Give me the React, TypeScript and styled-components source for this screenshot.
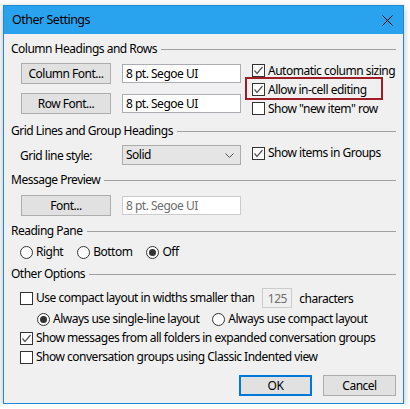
import React from "react";
import styled, { createGlobalStyle } from "styled-components";

const GlobalStyle = createGlobalStyle`
  html, body { margin: 0; padding: 0; background: #ffffff; }
  body {
    font-family: "Noto Sans", "Open Sans", "Liberation Sans", sans-serif;
    font-size: 12px;
    letter-spacing: -0.5px;
    color: #000;
  }
  * { box-sizing: border-box; }
`;

const Desktop = styled.div`
  padding: 5px 0 0 3px;
`;

const Window = styled.div`
  width: 401px;
  height: 399px;
  border: 1px solid #1c8ad9;
  box-shadow: 0 2px 7px rgba(0, 0, 0, 0.28);
  display: flex;
  flex-direction: column;
  background: #f0f0f0;
`;

const TitleBar = styled.div`
  height: 28px;
  background: #2aa3ef;
  display: flex;
  align-items: center;
  justify-content: space-between;
  padding: 0 10px 0 8px;
`;

const Title = styled.span`
  font-size: 12.5px;
  letter-spacing: -0.5px;
  line-height: 16px;
`;

const Body = styled.div`
  flex: 1;
  display: flex;
  flex-direction: column;
  padding: 7px 7px 0 7px;
`;

const Heading = styled.div<{ $top: number }>`
  display: flex;
  align-items: center;
  gap: 4px;
  height: 16px;
  line-height: 16px;
  margin-top: ${(p) => p.$top}px;
  white-space: nowrap;
  &::after {
    content: "";
    flex: 1;
    height: 1px;
    background: #a0a0a0;
    margin-top: 1px;
  }
`;

const FontGroup = styled.div`
  display: flex;
  align-items: flex-start;
  margin-top: 4px;
  padding-left: 10px;
  gap: 11px;
`;

const FontGrid = styled.div`
  display: grid;
  grid-template-columns: 90px 119px;
  column-gap: 11px;
  row-gap: 9px;
  align-items: center;
  padding-top: 2px;
`;

const CheckStack = styled.div`
  display: flex;
  flex-direction: column;
  position: relative;
`;

const Row = styled.div<{ $top: number; $indent: number }>`
  display: flex;
  align-items: center;
  margin-top: ${(p) => p.$top}px;
  padding-left: ${(p) => p.$indent}px;
  white-space: nowrap;
`;

const StyleRow = styled.div`
  display: grid;
  grid-template-columns: 90px 119px auto;
  column-gap: 11px;
  align-items: start;
  margin-top: 6px;
  padding-left: 10px;
`;

const FieldLabel = styled.span`
  align-self: center;
  margin-left: -1px;
  line-height: 16px;
  padding-top: 1px;
`;

const PushButton = styled.button<{ $default?: boolean; $w: number }>`
  width: ${(p) => p.$w}px;
  height: 21px;
  padding: 0;
  font: inherit;
  letter-spacing: inherit;
  color: #000;
  background: #e1e1e1;
  border: ${(p) => (p.$default ? "2px solid #0078d7" : "1px solid #adadad")};
  line-height: 16px;
`;

const TextBox = styled.div<{ $disabled?: boolean }>`
  height: 19px;
  width: 119px;
  background: #fff;
  border: 1px solid ${(p) => (p.$disabled ? "#cccccc" : "#abadb3")};
  color: ${(p) => (p.$disabled ? "#6d6d6d" : "#000")};
  padding: 0 3px;
  line-height: 17px;
  white-space: nowrap;
`;

const Combo = styled.div`
  height: 20px;
  width: 119px;
  background: #e5e5e5;
  border: 1px solid #acacac;
  display: flex;
  align-items: center;
  justify-content: space-between;
  padding: 0 6px 0 3px;
  line-height: 16px;
`;

const NumberBox = styled.div`
  width: 30px;
  height: 20px;
  border: 1px solid #cccccc;
  background: #f0f0f0;
  color: #6d6d6d;
  display: flex;
  align-items: center;
  justify-content: center;
  margin: 0 7px 0 8px;
`;

const CheckItem = styled.label<{ $h?: number }>`
  display: flex;
  align-items: center;
  gap: 3px;
  height: ${(p) => p.$h ?? 16}px;
  line-height: 16px;
  white-space: nowrap;
`;

const Box = styled.span`
  width: 13px;
  height: 13px;
  flex: none;
  border: 1px solid #333;
  background: #fff;
  display: flex;
  align-items: center;
  justify-content: center;
`;

const RadioItem = styled.label<{ $gap?: number }>`
  display: flex;
  align-items: center;
  gap: 3px;
  height: 16px;
  line-height: 16px;
  margin-right: ${(p) => p.$gap ?? 0}px;
  white-space: nowrap;
`;

const Circle = styled.span<{ $on?: boolean }>`
  width: 13px;
  height: 13px;
  flex: none;
  border-radius: 50%;
  border: 1px solid #333;
  background: #fff;
  display: flex;
  align-items: center;
  justify-content: center;
  &::after {
    content: "";
    width: 7px;
    height: 7px;
    border-radius: 50%;
    background: ${(p) => (p.$on ? "#333" : "transparent")};
  }
`;

const Highlight = styled.div`
  position: absolute;
  left: -7px;
  top: 16px;
  width: 138px;
  height: 23px;
  border: 2px solid #a01d26;
  pointer-events: none;
`;

const Footer = styled.div`
  display: flex;
  justify-content: flex-end;
  gap: 11px;
  margin-top: 10px;
`;

const Tick = () => (
  <svg width="11" height="11" viewBox="0 0 11 11">
    <polyline points="1.5,5.5 4,8.5 9.5,2" fill="none" stroke="#555" strokeWidth="1.2" />
  </svg>
);

const Checkbox = ({ checked, label, h }: { checked?: boolean; label: string; h?: number }) => (
  <CheckItem $h={h}>
    <Box>{checked && <Tick />}</Box>
    <span>{label}</span>
  </CheckItem>
);

const Radio = ({ on, label, gap }: { on?: boolean; label: string; gap?: number }) => (
  <RadioItem $gap={gap}>
    <Circle $on={on} />
    <span>{label}</span>
  </RadioItem>
);

const CloseIcon = () => (
  <svg width="11" height="11" viewBox="0 0 11 11">
    <path d="M0.5 0.5 L10.5 10.5 M10.5 0.5 L0.5 10.5" stroke="#000" strokeWidth="1" />
  </svg>
);

const Chevron = () => (
  <svg width="9" height="5" viewBox="0 0 9 5">
    <polyline points="0.5,0.5 4.5,4.5 8.5,0.5" fill="none" stroke="#555" strokeWidth="1" />
  </svg>
);

export default function App() {
  return (
    <Desktop>
      <GlobalStyle />
      <Window>
        <TitleBar>
          <Title>Other Settings</Title>
          <CloseIcon />
        </TitleBar>
        <Body>
          <Heading $top={0}>Column Headings and Rows</Heading>
          <FontGroup>
            <FontGrid>
              <PushButton $w={90}>Column Font...</PushButton>
              <TextBox>8 pt. Segoe UI</TextBox>
              <PushButton $w={90}>Row Font...</PushButton>
              <TextBox>8 pt. Segoe UI</TextBox>
            </FontGrid>
            <CheckStack>
              <Checkbox checked label="Automatic column sizing" h={19} />
              <Checkbox checked label="Allow in-cell editing" h={19} />
              <Checkbox label={'Show "new item" row'} h={19} />
              <Highlight />
            </CheckStack>
          </FontGroup>

          <Heading $top={5}>Grid Lines and Group Headings</Heading>
          <StyleRow>
            <FieldLabel>Grid line style:</FieldLabel>
            <Combo>
              <span>Solid</span>
              <Chevron />
            </Combo>
            <Checkbox checked label="Show items in Groups" />
          </StyleRow>

          <Heading $top={7}>Message Preview</Heading>
          <Row $top={7} $indent={10}>
            <PushButton $w={90}>Font...</PushButton>
            <TextBox $disabled style={{ marginLeft: 11 }}>8 pt. Segoe UI</TextBox>
          </Row>

          <Heading $top={7}>Reading Pane</Heading>
          <Row $top={5} $indent={9}>
            <Radio label="Right" gap={14} />
            <Radio label="Bottom" gap={14} />
            <Radio on label="Off" />
          </Row>

          <Heading $top={6}>Other Options</Heading>
          <Row $top={6} $indent={9}>
            <Checkbox label="Use compact layout in widths smaller than" />
            <NumberBox>125</NumberBox>
            <span>characters</span>
          </Row>
          <Row $top={3} $indent={26}>
            <Radio on label="Always use single-line layout" gap={13} />
            <Radio label="Always use compact layout" />
          </Row>
          <Row $top={3} $indent={9}>
            <Checkbox checked label="Show messages from all folders in expanded conversation groups" />
          </Row>
          <Row $top={3} $indent={9}>
            <Checkbox label="Show conversation groups using Classic Indented view" />
          </Row>

          <Footer>
            <PushButton $default $w={73}>OK</PushButton>
            <PushButton $w={73}>Cancel</PushButton>
          </Footer>
        </Body>
      </Window>
    </Desktop>
  );
}
